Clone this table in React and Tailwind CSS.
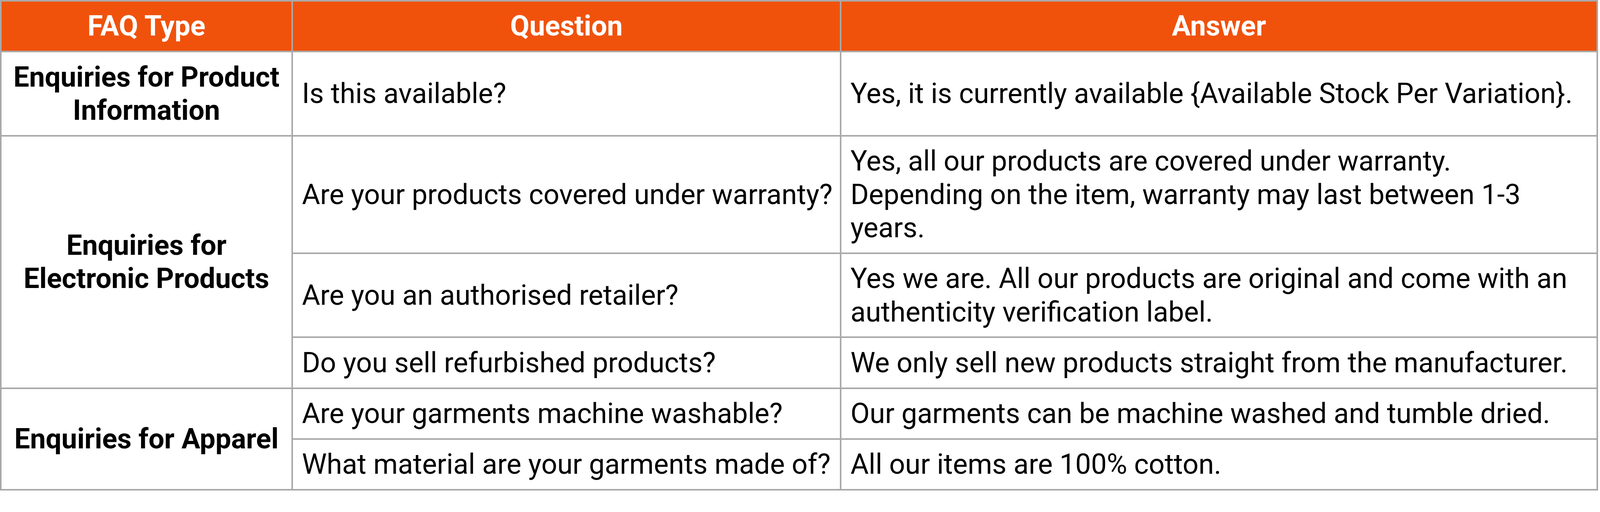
const groups = [
  {
    type: "Enquiries for Product Information",
    items: [
      {
        q: "Is this available?",
        a: "Yes, it is currently available {Available Stock Per Variation}.",
      },
    ],
  },
  {
    type: "Enquiries for Electronic Products",
    items: [
      {
        q: "Are your products covered under warranty?",
        a: "Yes, all our products are covered under warranty. Depending on the item, warranty may last between 1-3 years.",
      },
      {
        q: "Are you an authorised retailer?",
        a: "Yes we are. All our products are original and come with an authenticity verification label.",
      },
      {
        q: "Do you sell refurbished products?",
        a: "We only sell new products straight from the manufacturer.",
      },
    ],
  },
  {
    type: "Enquiries for Apparel",
    items: [
      {
        q: "Are your garments machine washable?",
        a: "Our garments can be machine washed and tumble dried.",
      },
      {
        q: "What material are your garments made of?",
        a: "All our items are 100% cotton.",
      },
    ],
  },
];

const cell = "border-[4px] border-[#a9a9a9] py-[20.4px] align-middle";

export default function App() {
  return (
    <div className="bg-white min-h-screen pr-[5px] font-[Roboto,sans-serif] text-black text-[71.5px] leading-[85.4px]">
      <table className="table-fixed border-collapse w-full">
        <colgroup>
          <col className="w-[18.25%]" />
          <col className="w-[34.36%]" />
          <col />
        </colgroup>
        <thead>
          <tr className="bg-[#f0520c] text-white font-bold">
            <th className={`${cell} px-[12px] text-center`}>FAQ Type</th>
            <th className={`${cell} px-[12px] text-center`}>Question</th>
            <th className={`${cell} px-[12px] text-center`}>Answer</th>
          </tr>
        </thead>
        <tbody>
          {groups.map((g) =>
            g.items.map((it, i) => (
              <tr key={g.type + i}>
                {i === 0 && (
                  <td rowSpan={g.items.length} className={`${cell} px-[12px] text-center font-bold`}>
                    {g.type}
                  </td>
                )}
                <td className={`${cell} pl-[23px] pr-[14px] text-left`}>{it.q}</td>
                <td className={`${cell} pl-[23px] pr-[16px] text-left`}>{it.a}</td>
              </tr>
            ))
          )}
        </tbody>
      </table>
    </div>
  );
}
